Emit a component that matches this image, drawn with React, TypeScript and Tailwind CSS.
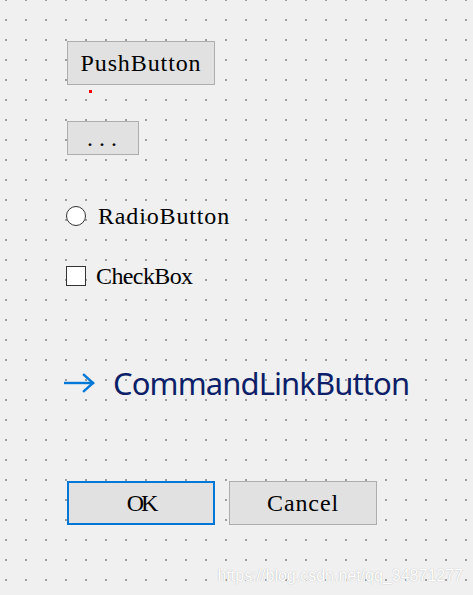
import React from 'react';

const serif = "font-['Liberation_Serif','Times_New_Roman',serif] text-[24px] text-black";

const btn =
  'flex items-center justify-center bg-[#e1e1e1] border border-[#adadad] ' + serif;

const ArrowIcon = () => (
  <svg width="32" height="20" viewBox="0 0 32 20" fill="none" stroke="#0078d7" strokeWidth="2.4" strokeLinecap="square">
    <path d="M1 10 H29" />
    <path d="M20 2 L29 10 L20 18" />
  </svg>
);

export default function App() {
  return (
    <div className="relative w-[473px] h-[595px] overflow-hidden bg-[#f0f0f0] [background-image:linear-gradient(to_right,#f0f0f0_18px,transparent_18px),linear-gradient(to_bottom,#f0f0f0_18px,#a0a0a0_18px)] [background-size:20px_20px] [background-position:7px_1px]">
      <div className="flex flex-col items-start pl-[67px] pt-[41px]">
        {/* push button */}
        <button className={btn + ' w-[148px] h-[44px] tracking-[0.9px]'}>PushButton</button>

        {/* tool button */}
        <button className={btn + ' mt-[36px] w-[72px] h-[34px] !justify-start pl-[19px] tracking-[6px]'}>...</button>

        {/* radio */}
        <label className="mt-[51px] -ml-px flex items-center h-[20px]">
          <span className="w-[20px] h-[20px] rounded-full border border-[#333333] bg-white" />
          <span className={serif + ' ml-[12px] tracking-[0.85px] leading-none'}>RadioButton</span>
        </label>

        {/* check box */}
        <label className="mt-[40px] -ml-px flex items-center h-[20px]">
          <span className="w-[20px] h-[20px] border border-[#333333] bg-white" />
          <span className={serif + ' ml-[10px] tracking-[-0.6px] leading-none'}>CheckBox</span>
        </label>

        {/* command link */}
        <div className="mt-[75px] -ml-[3px] flex items-center h-[44px]">
          <ArrowIcon />
          <span className="ml-[17px] font-['Noto_Sans','Open_Sans',sans-serif] text-[31px] leading-none tracking-[-0.9px] text-[#0c1f68]">
            CommandLinkButton
          </span>
        </div>

        {/* dialog buttons */}
        <div className="mt-[76px] flex gap-[14px]">
          <button className={btn + ' w-[148px] h-[44px] !border-2 !border-[#0078d7] tracking-[-3px]'}>OK</button>
          <button className={btn + ' w-[148px] h-[44px] tracking-[0.9px]'}>Cancel</button>
        </div>
      </div>

      {/* designer cursor marker */}
      <div className="absolute left-[89px] top-[90px] w-[3px] h-[3px] bg-[#ff0000]" />

      {/* watermark */}
      <div className="absolute right-[10px] bottom-[11px] font-['Liberation_Sans',Arial,sans-serif] text-[16px] leading-none text-white [text-shadow:0_0_1px_rgba(120,120,120,0.6)]">
        https://blog.csdn.net/qq_34871277
      </div>
    </div>
  );
}
